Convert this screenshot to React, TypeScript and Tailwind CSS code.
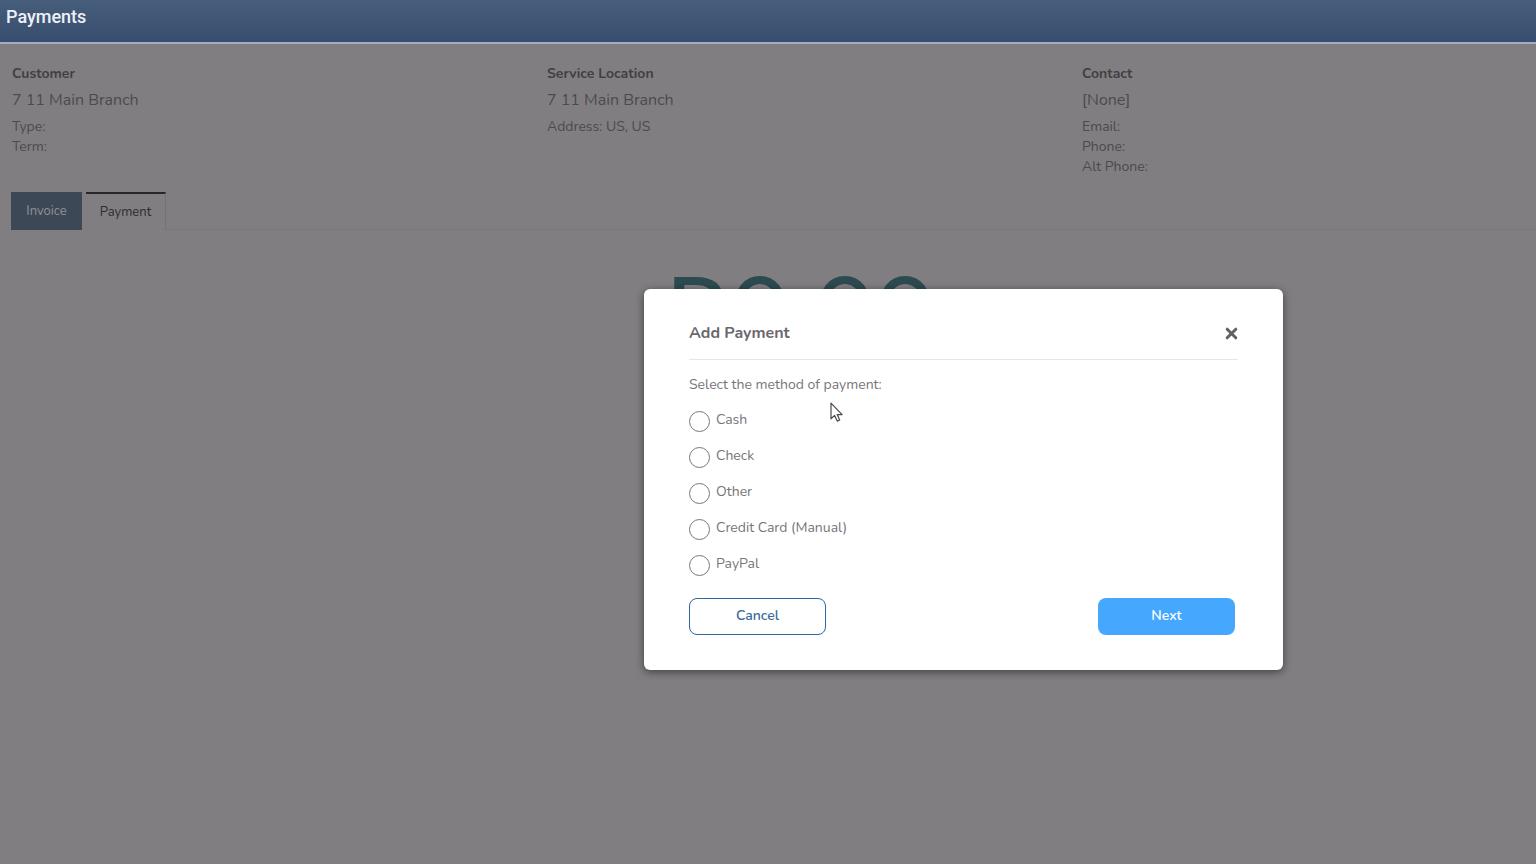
import { useState } from 'react'

interface InfoProps {
  title: string
  name: string
  lines: string[]
}

const METHODS = ['Cash', 'Check', 'Other', 'Credit Card (Manual)', 'PayPal']

function InfoColumn({ title, name, lines }: InfoProps) {
  return (
    <section className="text-[14px] leading-5 text-[#4d494c]">
      <h2 className="font-bold text-[#433f42]">{title}</h2>
      <p className="mt-1 mb-[5px] text-[16px] leading-6">{name}</p>
      {lines.map(line => (
        <p key={line}>{line}</p>
      ))}
    </section>
  )
}

/** Payment method picker, lies over the dimmed page. */
function AddPaymentDialog() {
  const [method, setMethod] = useState('')

  return (
    <div
      role="dialog"
      aria-labelledby="dialog-title"
      className="absolute top-[289px] left-[644px] w-[639px] rounded-md bg-white px-[45px] pt-8 pb-[35px] text-[#77757a] shadow-[0_2px_8px_rgba(0,0,0,0.5)]"
    >
      <div className="flex items-center justify-between border-b border-[#e6e6e8] pb-[14px]">
        <h2 id="dialog-title" className="text-[16px] leading-6 font-bold text-[#6a686c]">Add Payment</h2>
        <button type="button" aria-label="Close" className="text-[#626064]">
          <svg width="13" height="13" viewBox="0 0 13 13" fill="none" stroke="currentColor" strokeWidth="3" strokeLinecap="round">
            <path d="M2.2 2.2l8.6 8.6M10.8 2.2l-8.6 8.6" />
          </svg>
        </button>
      </div>

      <fieldset className="mt-[15px] text-[14px] leading-5">
        <legend className="mb-[15px]">Select the method of payment:</legend>
        <div className="flex flex-col gap-[14px]">
          {METHODS.map(m => (
            <label key={m} className="flex h-[22px] gap-[6px]">
              <input
                type="radio"
                name="method"
                value={m}
                checked={method === m}
                onChange={() => setMethod(m)}
                className="size-[21px] shrink-0 appearance-none self-end rounded-full border border-[#77757a] bg-white checked:border-[6px] checked:border-[#45a7fd]"
              />
              <span>{m}</span>
            </label>
          ))}
        </div>
      </fieldset>

      <div className="mt-[22px] flex justify-between pr-[3px] text-[14px] leading-5 font-semibold">
        <button type="button" className="h-[37px] w-[137px] rounded-lg border border-[#2f669c] pb-[2px] text-[#3c6b98]">Cancel</button>
        <button type="button" className="h-[37px] w-[137px] rounded-lg bg-[#45a7fd] pb-[2px] text-white">Next</button>
      </div>

      {/* Mouse pointer */}
      <svg className="absolute top-[113px] left-[186px]" width="13" height="21" viewBox="0 0 13 21" fill="#fff" stroke="#4a484c" strokeWidth="1.2" strokeLinejoin="round">
        <path d="M1 1.2v15.6l3.6-3.3 2.6 5.6 2.5-1.1-2.5-5.4h4.9z" />
      </svg>
    </div>
  )
}

export default function App() {
  return (
    <div className="relative min-h-screen overflow-hidden bg-[#817e81] font-['Nunito','Open_Sans',sans-serif]">
      <header className="h-11 border-b-2 border-[#a0adc2] bg-linear-to-b from-[#465d7c] to-[#384e6e] px-[6px] pt-[5px]">
        <h1 className="font-['Roboto',sans-serif] text-[18px] leading-6 font-medium text-[#eef2f7]">Payments</h1>
      </header>

      <main className="pt-5">
        <div className="grid grid-cols-[535fr_535fr_454fr] pl-[12px]">
          <InfoColumn title="Customer" name="7 11 Main Branch" lines={['Type:', 'Term:']} />
          <InfoColumn title="Service Location" name="7 11 Main Branch" lines={['Address: US, US']} />
          <InfoColumn title="Contact" name="[None]" lines={['Email:', 'Phone:', 'Alt Phone:']} />
        </div>

        <nav className="mt-[15px] flex text-[13px] leading-5">
          <div className="w-[11px]" />
          <button type="button" className="h-[38px] w-[71px] bg-[#3d4856] text-[#8f9298]">Invoice</button>
          <div className="w-[4px]" />
          <button type="button" className="h-[38px] w-[80px] border-t-2 border-r border-t-[#29262a] border-r-[#757275] text-[#2f2b2f]">Payment</button>
          <div className="grow border-b border-[#7a777a]" />
        </nav>

        <p className="mt-6 ml-16 text-center font-['Lato',sans-serif] text-[104px] leading-[116px] text-[#2c4b50]">R0.00</p>
      </main>

      <AddPaymentDialog />
    </div>
  )
}
